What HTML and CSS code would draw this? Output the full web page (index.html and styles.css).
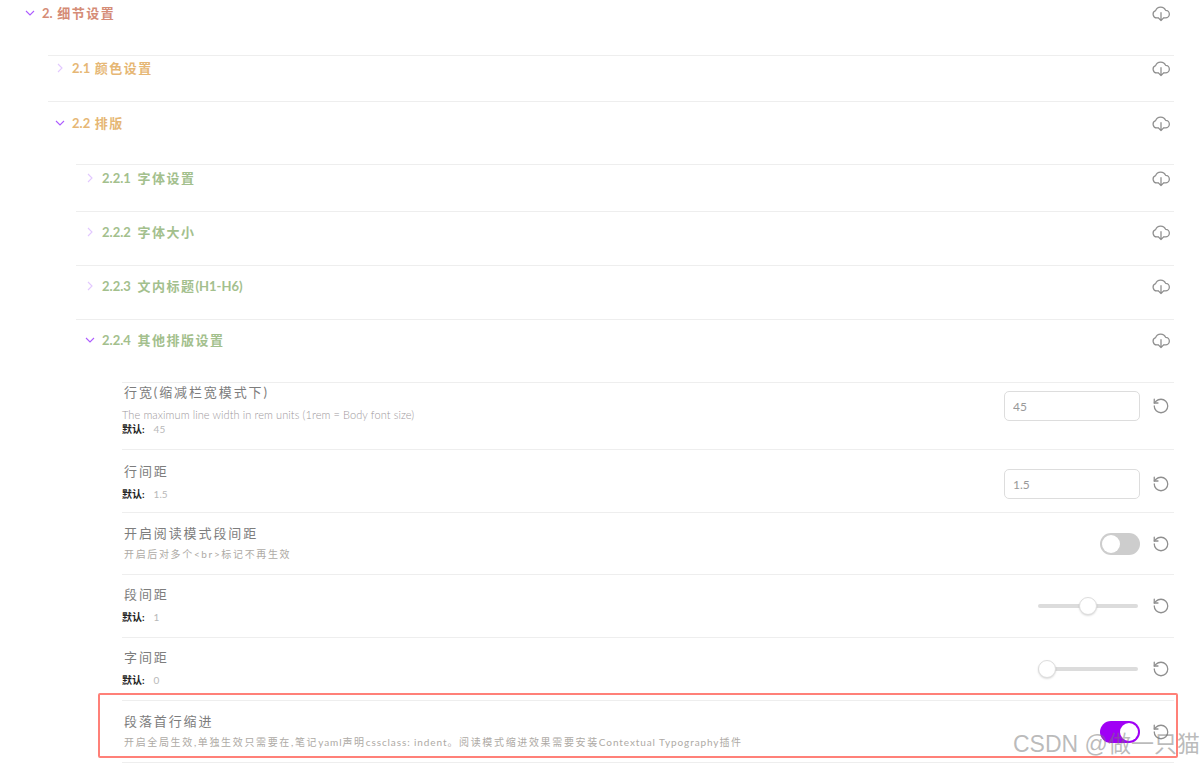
FILE: index.html
```html
<!DOCTYPE html>
<html lang="zh-CN">
<head>
    <meta charset="UTF-8">
    <meta name="viewport" content="width=device-width, initial-scale=1.0">
    <title>细节设置</title>
    <link rel="stylesheet" href="styles.css">
</head>
<body>
    <svg class="sprites" aria-hidden="true">
        <symbol id="i-open" viewBox="0 0 10 10"><path d="M1 3l4 4 4-4"/></symbol>
        <symbol id="i-closed" viewBox="0 0 10 10"><path d="M3 1l4 4-4 4"/></symbol>
        <symbol id="i-cloud" viewBox="0 0 24 24"><path d="M8 18.500H6.500A5 5 0 0 1 4.800 8.800 7.200 7.200 0 0 1 18.200 8.500 5 5 0 0 1 18 18.500H16"/><path d="M12 11.500V22M8.500 18.500 12 22l3.500-3.500"/></symbol>
        <symbol id="i-reset" viewBox="0 0 24 24"><path d="M3 12a9 9 0 1 0 9-9 9.750 9.750 0 0 0-6.740 2.740L3 8"/><path d="M3 3v5h5"/></symbol>
    </svg>

    <div class="page">
        <div class="heading h-l0 pad-a">
            <svg class="chev"><use href="#i-open"/></svg>
            <span class="title"><span class="en">2.</span> 细节设置</span>
            <svg class="action"><use href="#i-cloud"/></svg>
        </div>

        <div class="level1">
            <div class="heading h-l1 line pad-b">
                <svg class="chev closed"><use href="#i-closed"/></svg>
                <span class="title"><span class="en">2.1</span> 颜色设置</span>
                <svg class="action"><use href="#i-cloud"/></svg>
            </div>
            <div class="heading h-l1 line pad-d">
                <svg class="chev"><use href="#i-open"/></svg>
                <span class="title"><span class="en">2.2</span> 排版</span>
                <svg class="action"><use href="#i-cloud"/></svg>
            </div>

            <div class="level2">
                <div class="heading h-l2 line pad-c">
                    <svg class="chev closed"><use href="#i-closed"/></svg>
                    <span class="title"><span class="en">2.2.1</span> 字体设置</span>
                    <svg class="action"><use href="#i-cloud"/></svg>
                </div>
                <div class="heading h-l2 line pad-e">
                    <svg class="chev closed"><use href="#i-closed"/></svg>
                    <span class="title"><span class="en">2.2.2</span> 字体大小</span>
                    <svg class="action"><use href="#i-cloud"/></svg>
                </div>
                <div class="heading h-l2 line pad-e">
                    <svg class="chev closed"><use href="#i-closed"/></svg>
                    <span class="title"><span class="en">2.2.3</span> 文内标题<span class="en">(H1-H6)</span></span>
                    <svg class="action"><use href="#i-cloud"/></svg>
                </div>
                <div class="heading h-l2 line pad-f">
                    <svg class="chev"><use href="#i-open"/></svg>
                    <span class="title"><span class="en">2.2.4</span> 其他排版设置</span>
                    <svg class="action"><use href="#i-cloud"/></svg>
                </div>

                <div class="settings">
                    <div class="item item-tall">
                        <div class="info">
                            <div class="name">行宽(缩减栏宽模式下)</div>
                            <div class="desc desc-en">The maximum line width in rem units (1rem = Body font size)</div>
                            <div class="default"><b>默认:</b><span>45</span></div>
                        </div>
                        <input class="num" type="text" value="45">
                        <svg class="action"><use href="#i-reset"/></svg>
                    </div>
                    <div class="item item-input">
                        <div class="info">
                            <div class="name">行间距</div>
                            <div class="default default-gap"><b>默认:</b><span>1.5</span></div>
                        </div>
                        <input class="num" type="text" value="1.5">
                        <svg class="action"><use href="#i-reset"/></svg>
                    </div>
                    <div class="item">
                        <div class="info">
                            <div class="name">开启阅读模式段间距</div>
                            <div class="desc">开启后对多个&lt;br&gt;标记不再生效</div>
                        </div>
                        <div class="toggle"></div>
                        <svg class="action"><use href="#i-reset"/></svg>
                    </div>
                    <div class="item item-slider">
                        <div class="info">
                            <div class="name">段间距</div>
                            <div class="default default-gap"><b>默认:</b><span>1</span></div>
                        </div>
                        <div class="slider"><i class="thumb thumb-mid"></i></div>
                        <svg class="action"><use href="#i-reset"/></svg>
                    </div>
                    <div class="item item-slider">
                        <div class="info">
                            <div class="name">字间距</div>
                            <div class="default default-gap"><b>默认:</b><span>0</span></div>
                        </div>
                        <div class="slider"><i class="thumb thumb-start"></i></div>
                        <svg class="action"><use href="#i-reset"/></svg>
                    </div>
                    <div class="item">
                        <div class="info">
                            <div class="name">段落首行缩进</div>
                            <div class="desc">开启全局生效,单独生效只需要在,笔记<span class="en">yaml</span>声明<span class="en">cssclass: indent</span>。阅读模式缩进效果需要安装<span class="en">Contextual Typography</span>插件</div>
                        </div>
                        <div class="toggle on"></div>
                        <svg class="action"><use href="#i-reset"/></svg>
                    </div>
                    <div class="item end"></div>
                </div>
            </div>
        </div>
    </div>

    <!-- red box and watermark sit on top of the screenshot -->
    <div class="highlight"></div>
    <div class="watermark">CSDN @做一只猫</div>
</body>
</html>
```

FILE: styles.css
```css
* {
    margin: 0;
    padding: 0;
    box-sizing: border-box;
}

html, body {
    height: 764px;
    overflow: hidden;
}

body {
    position: relative;
    background: #fff;
    font-family: Lato, "Noto Sans CJK SC", sans-serif;
    color: #777;
}

.sprites {
    display: none;
}

.page {
    padding-right: 26px;
}

.level1 {
    margin-left: 48px;
}

.level2 {
    margin-left: 28px;
}

.settings {
    margin-left: 46px;
}

/* headings */
.heading {
    display: flex;
    align-items: flex-start;
}

.heading .title {
    flex: 1;
    font-size: 13px;
    line-height: 20px;
    font-weight: 700;
    letter-spacing: 1.500px;
}

.heading .en {
    letter-spacing: 0;
}

.h-l2 .en:first-child {
    margin-right: 2px;
}

.line {
    border-top: 1px solid #eee;
}

.h-l0 { padding-left: 25px; }
.h-l1 { padding-left: 7px; }
.h-l2 { padding-left: 9px; }

.h-l0 .title { color: #d58c76; }
.h-l1 .title { color: #e6b775; }
.h-l2 .title { color: #a3c08d; }

.pad-a { padding-top: 3px; height: 55px; }
.pad-b { padding-top: 2px; height: 46px; }
.pad-c { padding-top: 3px; height: 47px; }
.pad-d { padding-top: 11px; height: 63px; }
.pad-e { padding-top: 10px; height: 54px; }
.pad-f { padding-top: 10px; height: 63px; }

.chev {
    flex: none;
    width: 10px;
    height: 10px;
    margin: 5px 7px 5px 0;
    fill: none;
    stroke: #ad5cff;
    stroke-width: 1.100;
}

.chev.closed {
    stroke: #e2c8ff;
}

.action {
    flex: none;
    width: 18px;
    height: 18px;
    margin: 1px 4px 1px 0;
    fill: none;
    stroke: #8f8f8f;
    stroke-width: 1.700;
    stroke-linecap: round;
    stroke-linejoin: round;
}

/* settings rows */
.item {
    display: flex;
    align-items: center;
    height: 62px;
    border-top: 1px solid #eee;
}

.item-tall { height: 67px; padding-bottom: 20px; }
.item-input { height: 63px; padding-top: 6px; }
.item-slider { height: 63px; }
.item.end { height: 2px; }

.info {
    flex: 1;
    min-width: 0;
    margin-bottom: 3px;
}

.item-tall .info {
    align-self: flex-start;
}

.item-input .info {
    margin-bottom: 6px;
}

.name {
    padding-left: 2px;
    font-size: 13px;
    line-height: 18px;
    letter-spacing: 1.900px;
    color: #7d7d7d;
}

.desc {
    margin-top: 5px;
    padding-left: 2px;
    font-size: 10px;
    line-height: 14px;
    letter-spacing: 1.650px;
    color: #aeaaa5;
}

.desc .en {
    letter-spacing: 0.900px;
}

.desc-en {
    margin-top: 7px;
    padding-left: 0;
    font-size: 11px;
    font-weight: 300;
    letter-spacing: 0.090px;
    color: #9e989c;
}

.default {
    margin-top: 1px;
    font-size: 10px;
    line-height: 13px;
    color: #b8b8b8;
}

.default-gap {
    margin-top: 8px;
}

.default b {
    margin-right: 9px;
    color: #222;
}

.num {
    width: 136px;
    height: 30px;
    padding: 0 8px;
    border: 1px solid #ddd;
    border-radius: 5px;
    outline: none;
    font-family: inherit;
    font-size: 12px;
    color: #999;
}

.toggle {
    flex: none;
    position: relative;
    width: 40px;
    height: 22px;
    border-radius: 11px;
    background: #cdcdcd;
}

.toggle::after {
    content: "";
    position: absolute;
    top: 2px;
    left: 2px;
    width: 18px;
    height: 18px;
    border-radius: 50%;
    background: #fff;
}

.toggle.on {
    background: #a000f5;
}

.toggle.on::after {
    left: 20px;
}

.slider {
    flex: none;
    position: relative;
    width: 100px;
    height: 4px;
    margin-right: 2px;
    border-radius: 2px;
    background: #dcdcdc;
}

.thumb {
    position: absolute;
    top: -7px;
    width: 18px;
    height: 18px;
    border-radius: 50%;
    background: #fff;
    border: 1px solid #ddd;
    box-shadow: 0 1px 2px rgba(0, 0, 0, 0.15);
}

.thumb-mid { left: 41px; }
.thumb-start { left: 0; }

.item .action {
    margin-left: 12px;
}

/* overlays */
.highlight {
    position: absolute;
    left: 98px;
    top: 693px;
    width: 1080px;
    height: 65px;
    border: 2px solid #ff8078;
    border-radius: 2px;
}

.watermark {
    position: absolute;
    left: 1013px;
    top: 730px;
    font-family: "Liberation Sans", "Noto Sans CJK SC", sans-serif;
    font-size: 23px;
    line-height: 28px;
    white-space: nowrap;
    color: rgba(120, 120, 120, 0.5);
}
```
